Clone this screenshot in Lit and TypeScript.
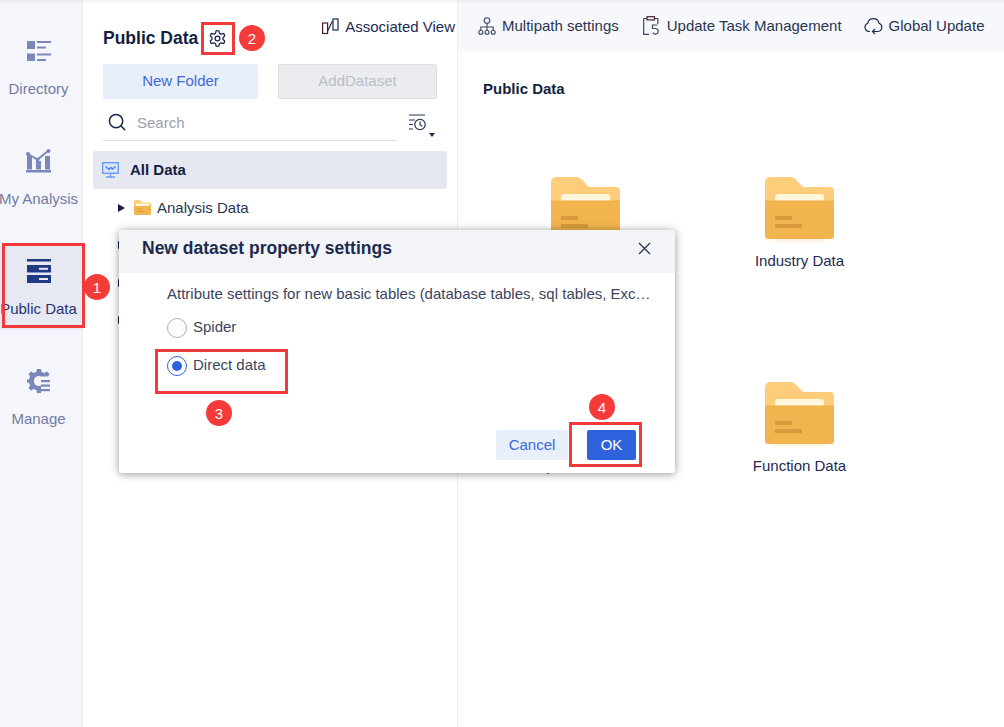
import { LitElement, html, css, svg } from "lit";
import { customElement } from "lit/decorators.js";

const folder = svg`<svg class="folder" width="69" height="70" viewBox="0 0 69 70">
<defs><filter id="fs" x="-20%" y="-20%" width="140%" height="150%"><feGaussianBlur stdDeviation="2"/></filter></defs>
<rect x="8" y="58" width="53" height="6" fill="#f2c985" opacity=".35" filter="url(#fs)"/>
<path d="M0 5a5 5 0 0 1 5-5h20c2 0 3.500 .6 5 1.800L38 10h27a4 4 0 0 1 4 4v12H0z" fill="#fdcd7c"/>
<path d="M10 20a3 3 0 0 1 3-3h43a3 3 0 0 1 3 3v6H10z" fill="#fff7dc"/>
<path d="M0 24h69v35a3 3 0 0 1-3 3H3a3 3 0 0 1-3-3z" fill="#f2b44f"/>
<path d="M.500 24h68" stroke="#efae47" stroke-width="1"/>
<rect x="10" y="39" width="17" height="4" fill="#d9993c"/>
<rect x="10" y="47" width="27" height="4" fill="#d9993c"/>
</svg>`;

const smallFolder = svg`<svg width="17" height="15" viewBox="0 0 17 15"><path d="M0 1.500A1.500 1.500 0 0 1 1.500 0h4.500l2 2.500h7.500A1.500 1.500 0 0 1 17 4v2H0z" fill="#fdcd7c"/><rect x="2" y="3.500" width="13" height="3" fill="#fff7dc"/><path d="M0 6h17v7.500a1.500 1.500 0 0 1-1.500 1.500h-14A1.500 1.500 0 0 1 0 13.500z" fill="#f2b44f"/><path d="M2.500 9h5M2.500 11.500h8" stroke="#d9993c"/></svg>`;

const icons = {
  dir: svg`<svg width="24" height="22" viewBox="0 -2 24 22" fill="#7a87b8"><rect width="8" height="8"/><rect y="12.500" width="8" height="8"/><rect x="10" width="14" height="2"/><rect x="10" y="5.500" width="9" height="2"/><rect x="10" y="12.500" width="14" height="2"/><rect x="10" y="18" width="9" height="2"/></svg>`,
  analysis: svg`<svg width="25" height="24" viewBox="0 0 25 24" fill="#7a87b8"><rect x="1" y="6.500" width="5" height="14"/><rect x="10" y="12" width="5" height="8.500"/><rect x="19" y="7" width="5" height="13.500"/><rect y="21" width="25" height="2.500"/><path d="M2 5l9.500 5.500L22 2" fill="none" stroke="#7a87b8" stroke-width="2"/><circle cx="2" cy="5" r="2"/><circle cx="11.500" cy="10.500" r="2"/><circle cx="22.500" cy="2" r="2"/></svg>`,
  data: svg`<svg width="24" height="24" viewBox="0 0 24 24"><rect width="24" height="2.500" fill="#1f3a82"/><rect y="6" width="24" height="7.500" fill="#1f3a82"/><rect y="16" width="24" height="8" fill="#1f3a82"/><rect x="12" y="8.800" width="9" height="2" fill="#e6e8f2"/><rect x="12" y="19" width="9" height="2" fill="#e6e8f2"/></svg>`,
  manage: svg`<svg width="24" height="24" viewBox="0 0 24 24"><path d="M10 0h4l.7 3 2.700 1.100L20 2.500 22.500 5 21.200 7.500 14 7.500a5 5 0 1 0 0 9V21l.3 0-.3 3h-4l-.7-3-2.700-1.100L4 21.500 1.500 19l1.600-2.600L2 13.700 0 13.500v-3l2-.2 1.100-2.700L1.500 5 4 2.500l2.600 1.600L9.300 3z" fill="#7a87b8"/><rect x="14" y="11" width="9" height="2.200" fill="#7a87b8"/><rect x="14" y="15.500" width="9" height="2.200" fill="#7a87b8"/><rect x="14" y="20" width="9" height="2.200" fill="#7a87b8"/></svg>`,
  gear: svg`<svg width="19" height="19" viewBox="0 0 24 24" fill="none" stroke="#1d2b4f" stroke-width="1.700" stroke-linecap="round" stroke-linejoin="round"><path d="M12.220 2h-.44a2 2 0 0 0-2 2v.18a2 2 0 0 1-1 1.730l-.43.25a2 2 0 0 1-2 0l-.15-.08a2 2 0 0 0-2.730.73l-.22.38a2 2 0 0 0 .73 2.730l.15.1a2 2 0 0 1 1 1.720v.51a2 2 0 0 1-1 1.740l-.15.09a2 2 0 0 0-.73 2.730l.22.38a2 2 0 0 0 2.730.73l.15-.08a2 2 0 0 1 2 0l.43.25a2 2 0 0 1 1 1.730V20a2 2 0 0 0 2 2h.44a2 2 0 0 0 2-2v-.18a2 2 0 0 1 1-1.730l.43-.25a2 2 0 0 1 2 0l.15.08a2 2 0 0 0 2.730-.73l.22-.39a2 2 0 0 0-.73-2.730l-.15-.08a2 2 0 0 1-1-1.740v-.5a2 2 0 0 1 1-1.740l.15-.09a2 2 0 0 0 .73-2.730l-.22-.38a2 2 0 0 0-2.730-.73l-.15.08a2 2 0 0 1-2 0l-.43-.25a2 2 0 0 1-1-1.730V4a2 2 0 0 0-2-2z"/><circle cx="12" cy="12" r="3"/></svg>`,
  assoc: svg`<svg width="17" height="17" viewBox="0 0 17 17" fill="none" stroke-width="1.200"><rect x=".6" y="5" width="5" height="10.500" stroke="#4a1f2e"/><path d="M5.600 13L10.500 3" stroke="#1d2b4f"/><rect x="11" y="1" width="5" height="11" stroke="#1d2b4f"/></svg>`,
  multi: svg`<svg width="18" height="18" viewBox="0 0 18 18" fill="none" stroke="#3c4661" stroke-width="1.100"><circle cx="9" cy="3.500" r="2.800"/><path d="M9 6.300V10M2.800 13.500V10H15.200V13.500M9 10v3.500"/><circle cx="2.800" cy="15.200" r="2"/><circle cx="9" cy="15.200" r="2"/><circle cx="15.200" cy="15.200" r="2"/></svg>`,
  task: svg`<svg width="18" height="19" viewBox="0 0 18 19" fill="none" stroke="#3c4661" stroke-width="1.200"><path d="M4 2.500H.7v15.800H6M11 2.500h3.800V8"/><rect x="4" y=".7" width="7.500" height="3.200" stroke="#4a1f2e"/><path d="M14.500 9H9.500v3.500h3a2.800 2.800 0 1 1-2.600 4"/></svg>`,
  cloud: svg`<svg width="19" height="18" viewBox="0 0 19 18" fill="none" stroke="#1d2b4f" stroke-width="1.200"><path d="M6 14.500H5A4.300 4.300 0 0 1 3.800 6.200 5.700 5.700 0 0 1 15 6.200 4.300 4.300 0 0 1 14 14.500H8.500"/><path d="M11 12l-2.500 2.500L11 17"/></svg>`,
  search: svg`<svg width="19" height="19" viewBox="0 0 20 20" fill="none" stroke="#1d2b4f" stroke-width="1.600"><circle cx="8.500" cy="8.500" r="7"/><path d="M13.500 13.500L18 18"/></svg>`,
  filter: svg`<svg width="20" height="19" viewBox="0 0 20 19" fill="none" stroke="#2a3550" stroke-width="1.200"><path d="M1 1h16M1 6h6M1 10.500h4M1 15h4"/><circle cx="12" cy="10.500" r="5.200"/><path d="M12 7.500v3.200l2.300 1.500"/></svg>`,
  monitor: svg`<svg width="17" height="16" viewBox="0 0 17 16" fill="none"><rect x=".7" y=".7" width="15.600" height="10.600" fill="#d7e4fb" stroke="#6f9cf0" stroke-width="1.400"/><path d="M3.500 4.500l3.500 3 2-2 1.500 1.500 3-2.500" stroke="#4a80e8" stroke-width="1.300"/><path d="M8.500 11.500v3M4 15h9" stroke="#6f9cf0" stroke-width="1.400"/></svg>`,
  close: svg`<svg width="13" height="13" viewBox="0 0 13 13" stroke="#2a3550" stroke-width="1.300"><path d="M1 1l11 11M12 1L1 12"/></svg>`,
};

@customElement("app-root")
export class AppRoot extends LitElement {
  static styles = css`
    :host { display: block; width: 1004px; height: 727px; position: relative; overflow: hidden; background: #fff;
      font-family: "Liberation Sans", Arial, sans-serif; font-size: 15px; color: #1d2b4f; }
    .app { display: flex; height: 727px; }
    .topshade { position: absolute; left: 0; right: 0; top: 0; height: 4px; background: linear-gradient(rgba(0,0,0,.05), rgba(0,0,0,0)); pointer-events: none; }

    .side { width: 82px; flex: none; background: #f5f6fb; border-right: 1px solid #eceef3; padding-top: 25px; }
    .nav { height: 85px; margin-bottom: 25px; padding-right: 5px; box-sizing: border-box; display: flex; flex-direction: column; align-items: center; color: #727ba3; }
    .nav svg { margin-top: 14px; }
    .nav span { margin-top: auto; padding-bottom: 13px; white-space: nowrap; }
    .nav.active { background: #e6e8f2; color: #27356f; }

    .panel { width: 364px; flex: none; border-right: 1px solid #eceef3; padding-left: 10px; }
    .phead { display: flex; justify-content: space-between; padding-left: 10px; height: 64px; }
    .ttl { display: flex; align-items: center; gap: 10px; height: 38px; margin-top: 19px; font-size: 17.500px; font-weight: 700; color: #141f3f; white-space: nowrap; }
    .assoc { display: flex; align-items: center; gap: 6px; height: 18px; margin-top: 17px; margin-right: 2px; white-space: nowrap; }
    .btns { display: flex; gap: 20px; padding-left: 10px; }
    .btn { height: 35px; padding-bottom: 2px; box-sizing: border-box; display: flex; align-items: center; justify-content: center; border-radius: 2px; }
    .b1 { width: 155px; background: #e8eefa; color: #3d6ad6; }
    .b2 { width: 159px; background: #ebecf0; color: #b9bdc8; border: 1px solid #dcdee4; }
    .searchrow { display: flex; padding-left: 10px; height: 52px; }
    .search { width: 294px; height: 36px; margin-top: 6px; border-bottom: 1px solid #dcdfe8; display: flex; align-items: center; gap: 10px; padding-left: 5px; box-sizing: border-box; color: #9aa0b0; }
    .filter { margin: 15px 0 0 11px; display: flex; }
    .caret { width: 0; height: 0; border: 3px solid transparent; border-top: 4px solid #1d2b4f; border-bottom: 0; margin: 19px 0 0 1px; }
    .allrow { width: 354px; height: 38px; padding-bottom: 1px; background: #e6e8f1; border-radius: 2px; display: flex; align-items: center; gap: 11px; padding-left: 9px; box-sizing: border-box; font-weight: 700; color: #141f3f; }
    .tr { height: 37.500px; padding-left: 25px; display: flex; align-items: center; gap: 9px; color: #2a3550; white-space: nowrap; }
    .tr span { margin-left: -3px; }
    .arrow { width: 0; height: 0; border: 4.500px solid transparent; border-left: 7px solid #141f3f; border-right: 0; }

    .main { flex: 1; min-width: 0; }
    .bar { height: 51px; background: #f7f8fc; display: flex; align-items: center; padding-left: 20px; }
    .tool { display: flex; align-items: center; gap: 6px; margin-right: 24px; white-space: nowrap; color: #2a3550; }
    .tool:nth-child(2) { margin-right: 22px; }
    .crumb { margin: 30px 0 0 25px; font-weight: 700; color: #141f3f; height: 16px; line-height: 16px; }
    .grid { display: grid; grid-template-columns: 119px 119px; column-gap: 95px; margin: 80px 0 0 68px; }
    .cell { height: 205px; display: flex; flex-direction: column; align-items: center; color: #1d2b4f; white-space: nowrap; }
    .cell span { margin-top: 5px; }

    .modal { position: absolute; left: 119px; top: 230px; width: 556px; height: 243px; background: #fff; border-radius: 3px; box-shadow: 0 1px 9px rgba(0,0,0,.42); display: flex; flex-direction: column; }
    .mhead { height: 43px; flex: none; background: #f2f4f8; border-radius: 3px 3px 0 0; display: flex; align-items: center; justify-content: space-between; padding: 0 24px 7px 23px; box-sizing: border-box; font-size: 17.500px; font-weight: 700; color: #1d2b4f; }
    .mbody { padding: 13px 0 0 48px; flex: 1; }
    .desc { width: 487px; overflow: hidden; text-overflow: ellipsis; white-space: nowrap; color: #3a4560; line-height: 16px; }
    .radio { display: flex; align-items: center; gap: 6px; height: 20px; color: #3a4560; }
    .radio span { margin-top: -4px; }
    .r1 { margin-top: 16px; }
    .r2 { margin-top: 18px; }
    .dot { width: 20px; height: 20px; border-radius: 50%; box-sizing: border-box; border: 1px solid #a9aebd; background: #fff; display: flex; align-items: center; justify-content: center; }
    .dot.on { border-color: #2d62dc; }
    .dot.on i { width: 10px; height: 10px; border-radius: 50%; background: #2d62dc; display: block; }
    .mfoot { display: flex; justify-content: flex-end; gap: 19px; padding: 0 39px 13px 0; }
    .mfoot div { height: 30px; padding-bottom: 2px; box-sizing: border-box; display: flex; align-items: center; justify-content: center; border-radius: 2px; }
    .cancel { width: 72px; background: #e8eefa; color: #3d6ad6; }
    .ok { width: 49px; background: #2d62dc; color: #fff; }

    .mark { position: absolute; border: 3px solid #f23a3a; box-sizing: border-box; }
    .m1 { left: 2px; top: 243px; width: 83px; height: 85px; }
    .m2 { left: 201px; top: 22px; width: 34px; height: 33px; }
    .m3 { left: 155px; top: 349px; width: 133px; height: 45px; }
    .m4 { left: 569px; top: 422px; width: 73px; height: 45px; }
    .badge { position: absolute; width: 26px; height: 26px; border-radius: 50%; background: #f53a3a; color: #fff; font-size: 15px; display: flex; align-items: center; justify-content: center; }
    .n1 { left: 84px; top: 274px; }
    .n2 { left: 239px; top: 25px; }
    .n3 { left: 206px; top: 400px; }
    .n4 { left: 589px; top: 394px; }
  `;

  render() {
    return html`
      <div class="app">
        <aside class="side">
          <div class="nav">${icons.dir}<span>Directory</span></div>
          <div class="nav">${icons.analysis}<span>My Analysis</span></div>
          <div class="nav active">${icons.data}<span>Public Data</span></div>
          <div class="nav">${icons.manage}<span>Manage</span></div>
        </aside>
        <section class="panel">
          <div class="phead">
            <div class="ttl">Public Data ${icons.gear}</div>
            <div class="assoc">${icons.assoc}<span>Associated View</span></div>
          </div>
          <div class="btns"><div class="btn b1">New Folder</div><div class="btn b2">AddDataset</div></div>
          <div class="searchrow">
            <div class="search">${icons.search}<span>Search</span></div>
            <div class="filter">${icons.filter}<div class="caret"></div></div>
          </div>
          <div class="allrow">${icons.monitor}<span>All Data</span></div>
          <div class="tree">
            <div class="tr"><i class="arrow"></i>${smallFolder}<span>Analysis Data</span></div>
            <div class="tr"><i class="arrow"></i>${smallFolder}<span>Business Data</span></div>
            <div class="tr"><i class="arrow"></i>${smallFolder}<span>Operation Data</span></div>
            <div class="tr"><i class="arrow"></i>${smallFolder}<span>Industry Data</span></div>
          </div>
        </section>
        <main class="main">
          <div class="bar">
            <div class="tool">${icons.multi}<span>Multipath settings</span></div>
            <div class="tool">${icons.task}<span>Update Task Management</span></div>
            <div class="tool">${icons.cloud}<span>Global Update</span></div>
          </div>
          <div class="crumb">Public Data</div>
          <div class="grid">
            <div class="cell">${folder}<span>Analysis Data</span></div>
            <div class="cell">${folder}<span>Industry Data</span></div>
            <div class="cell">${folder}<span>Operation Data</span></div>
            <div class="cell">${folder}<span>Function Data</span></div>
          </div>
        </main>
      </div>
      <div class="topshade"></div>

      <div class="modal">
        <div class="mhead"><span>New dataset property settings</span>${icons.close}</div>
        <div class="mbody">
          <div class="desc">Attribute settings for new basic tables (database tables, sql tables, Excel tables) default to</div>
          <div class="radio r1"><div class="dot"></div><span>Spider</span></div>
          <div class="radio r2"><div class="dot on"><i></i></div><span>Direct data</span></div>
        </div>
        <div class="mfoot"><div class="cancel">Cancel</div><div class="ok">OK</div></div>
      </div>

      <div class="mark m1"></div>
      <div class="mark m2"></div>
      <div class="mark m3"></div>
      <div class="mark m4"></div>
      <div class="badge n1">1</div>
      <div class="badge n2">2</div>
      <div class="badge n3">3</div>
      <div class="badge n4">4</div>
    `;
  }
}
